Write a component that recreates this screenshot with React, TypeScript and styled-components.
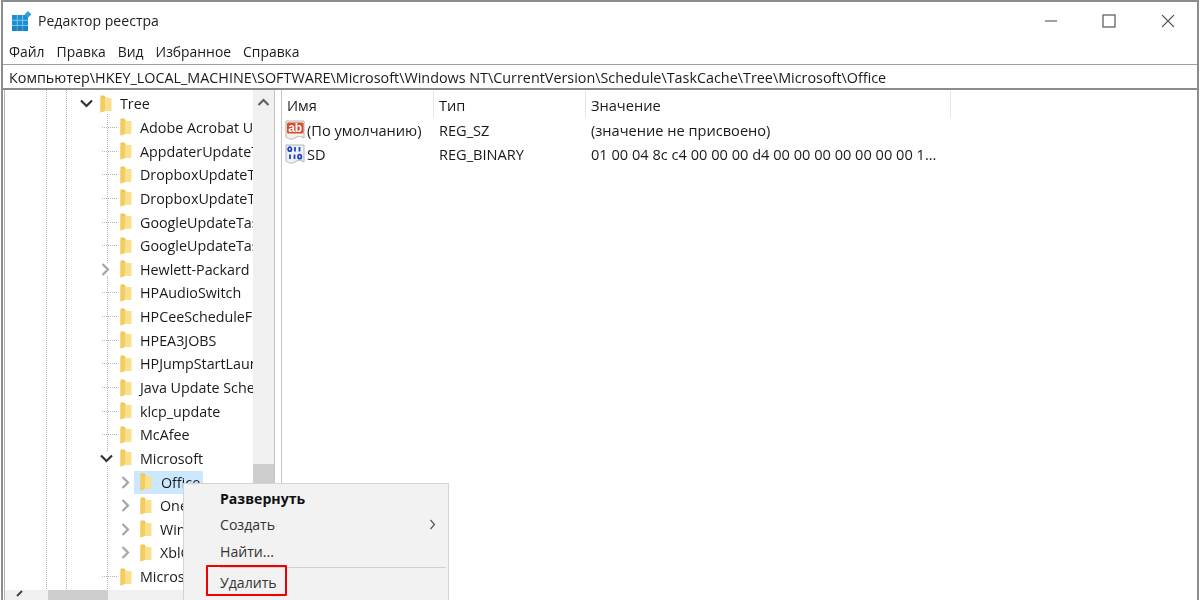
import React from 'react';
import styled, { createGlobalStyle } from 'styled-components';

const GlobalStyle = createGlobalStyle`
  html, body {
    margin: 0;
    padding: 0;
    background: #fff;
    overflow: hidden;
  }
  body {
    font-family: "Open Sans", "Noto Sans", "Liberation Sans", sans-serif;
    font-size: 14.6px;
    color: #1a1a1a;
  }
`;

const Window = styled.div`
  position: relative;
  box-sizing: border-box;
  width: 1198px;
  height: 600px;
  margin-left: 1px;
  border: 2px solid #8c8c8c;
  border-bottom: 0;
  display: flex;
  flex-direction: column;
  overflow: hidden;
  filter: blur(0.4px);
`;

const TitleBar = styled.div`
  height: 37px;
  display: flex;
  align-items: center;
  padding-left: 7px;
  flex: none;
`;

const Title = styled.span`
  flex: 1;
  margin-left: 6px;
  font-size: 14.05px;
  color: #222;
`;

const WinButton = styled.div`
  width: 58.5px;
  height: 37px;
  display: flex;
  align-items: center;
  justify-content: center;
`;

const MenuBar = styled.div`
  height: 25px;
  flex: none;
  display: flex;
  align-items: center;
  padding-left: 6px;
  gap: 12px;
  font-size: 13.9px;
`;

const AddressBar = styled.div`
  height: 26px;
  flex: none;
  box-sizing: border-box;
  border-top: 1px solid #a0a0a0;
  border-bottom: 2px solid #8c8c8c;
  display: flex;
  align-items: center;
  padding: 1px 0 0 6px;
  font-size: 14.37px;
  white-space: nowrap;
`;

const Panes = styled.div`
  flex: 1;
  display: flex;
  min-height: 0;
`;

const TreePane = styled.div`
  width: 271px;
  flex: none;
  box-sizing: border-box;
  border-left: 1px solid #b5b5b5;
  margin-left: 1px;
  border-right: 1px solid #c4c4c4;
  display: grid;
  grid-template-columns: 1fr 21px;
  grid-template-rows: 1fr 10px;
  min-height: 0;
`;

const TreeView = styled.div`
  overflow: hidden;
  min-width: 0;
  padding-top: 2px;
  font-size: 14.3px;
  background-image:
    repeating-linear-gradient(to bottom, #b4b4b4 0 1px, transparent 1px 2px),
    repeating-linear-gradient(to bottom, #b4b4b4 0 1px, transparent 1px 2px),
    repeating-linear-gradient(to bottom, #b4b4b4 0 1px, transparent 1px 2px);
  background-size: 1px 100%;
  background-repeat: no-repeat;
  background-position: 41px 0, 61px 0, 102px 24px;
`;

const Row = styled.div<{ $level: number }>`
  height: 23.65px;
  display: flex;
  align-items: center;
  white-space: nowrap;
  padding-left: ${(p) => 77 + p.$level * 20}px;
`;

const Expander = styled.span`
  width: 16px;
  box-sizing: border-box;
  padding-right: 8px;
  flex: none;
  display: flex;
  justify-content: center;
  background: #fff;
`;

const Stub = styled.span`
  width: 16px;
  height: 1px;
  flex: none;
  background-image: repeating-linear-gradient(to right, #b4b4b4 0 1px, transparent 1px 2px);
`;

const RowLabel = styled.span<{ $selected?: boolean }>`
  display: flex;
  align-items: center;
  gap: ${(p) => (p.$selected ? 9 : 8)}px;
  height: 23px;
  margin-left: -4px;
  padding-left: 6px;
  padding-right: 3px;
  background: ${(p) => (p.$selected ? '#cce8ff' : 'transparent')};
`;

const VScroll = styled.div`
  background: #f0f0f0;
  display: flex;
  flex-direction: column;
  align-items: center;
  min-height: 0;
`;

const VArrow = styled.div`
  height: 24px;
  display: flex;
  align-items: center;
`;

const VThumb = styled.div`
  width: 100%;
  height: 24px;
  margin-top: 350px;
  background: #cdcdcd;
`;

const HScroll = styled.div`
  background: #f0f0f0;
  display: flex;
  align-items: center;
  padding-left: 10px;
  overflow: hidden;
`;

const HThumb = styled.div`
  width: 60px;
  height: 100%;
  margin-left: 23px;
  background: #cdcdcd;
`;

const Corner = styled.div`
  background: #f0f0f0;
`;

const ListPane = styled.div`
  flex: 1;
  margin-left: 6px;
  border-left: 1px solid #c4c4c4;
  min-width: 0;
`;

const ListHeader = styled.div`
  height: 28px;
  display: flex;
  align-items: center;
`;

const Column = styled.div<{ $width: number }>`
  width: ${(p) => p.$width}px;
  flex: none;
  box-sizing: border-box;
  padding: 1px 0 0 5px;
  line-height: 26px;
  border-right: 1px solid #e5e5e5;
  white-space: nowrap;
`;

const ListRow = styled.div`
  height: 24px;
  display: flex;
  align-items: center;
`;

const NameCell = styled.div`
  width: 152px;
  flex: none;
  display: flex;
  align-items: center;
  gap: 2px;
  padding-left: 3px;
  box-sizing: border-box;
  white-space: nowrap;
`;

const Cell = styled.div<{ $width: number }>`
  width: ${(p) => p.$width}px;
  flex: none;
  padding-left: 5px;
  box-sizing: border-box;
  white-space: nowrap;
`;

const ContextMenu = styled.div`
  position: absolute;
  left: 180px;
  top: 481px;
  width: 266px;
  height: 130px;
  box-sizing: border-box;
  background: #f2f2f2;
  border: 1px solid #d4d4d4;
  padding-top: 1px;
  font-size: 14.1px;
`;

const MenuItem = styled.div<{ $bold?: boolean }>`
  height: 26.5px;
  display: flex;
  align-items: center;
  justify-content: space-between;
  padding: 0 8px 0 36px;
  font-weight: ${(p) => (p.$bold ? 700 : 400)};
  color: ${(p) => (p.$bold ? '#111' : '#333')};
`;

const Separator = styled.div`
  height: 1px;
  margin: 2px 2px 2px 36px;
  background: #d0d0d0;
`;

const Highlight = styled.div`
  position: absolute;
  left: 22px;
  top: 81px;
  width: 81px;
  height: 31px;
  box-sizing: border-box;
  border: 2.5px solid #f00000;
  border-radius: 1px;
`;

const RegIcon = () => (
  <svg width="22" height="22" viewBox="0 0 22 22" style={{ flex: 'none' }}>
    <rect x="2" y="5" width="16" height="16" fill="#1b8fd0" />
    <path d="M2 10.3h16M2 15.6h16M7.3 5v16M12.6 5v16" stroke="#7cc6ee" strokeWidth="1" />
    <rect x="2" y="16" width="16" height="5" fill="#0f6fae" opacity="0.35" />
    <path d="M18 1l3.4 3.4L18 7.8l-3.4-3.4z" fill="#3a9ed6" />
  </svg>
);

const Folder = () => (
  <svg width="12" height="18" viewBox="0 0 12 18" style={{ flex: 'none' }}>
    <path d="M0.5 0.5h4l1 2h1v13l-6 2z" fill="#f0c850" />
    <path d="M2 3h9.5v13H2z" fill="#fbe08c" />
    <path d="M0.5 3h4.5v12.4l-4.5 2.1z" fill="#f3cd62" />
  </svg>
);

const Chevron = ({ dir, color }: { dir: 'right' | 'down' | 'up' | 'small'; color: string }) => {
  const d = {
    right: 'M2.5 1l5.5 5.5-5.5 5.5',
    small: 'M3.5 2l4 4.5-4 4.5',
    down: 'M1 3.5l5.5 5.5 5.5-5.5',
    up: 'M1.5 9l5-5 5 5',
  }[dir];
  return (
    <svg width="13" height="13" viewBox="0 0 13 13" style={{ flex: 'none' }}>
      <path d={d} fill="none" stroke={color} strokeWidth={dir === 'small' ? 1.2 : 2.2} />
    </svg>
  );
};

const StringIcon = () => (
  <svg width="20" height="21" viewBox="0 0 20 21" style={{ flex: 'none' }}>
    <path d="M1 1h18v17c-3-2-6-2-9 0-3 2-6 1-9-1z" fill="#f3f3f3" stroke="#b4b4b4" />
    <rect x="2" y="2.5" width="16.5" height="11" rx="1.5" fill="#dd4a2d" />
    <text x="10.2" y="12" textAnchor="middle" fontSize="12" fontWeight="700" fill="#fff" fontFamily="'Liberation Sans', sans-serif">ab</text>
  </svg>
);

const BinaryIcon = () => (
  <svg width="20" height="21" viewBox="0 0 20 21" style={{ flex: 'none' }}>
    <path d="M1 1h18v17c-3-2-6-2-9 0-3 2-6 1-9-1z" fill="#eef1f8" stroke="#b4b4b4" />
    <g fill="none" stroke="#2346c4" strokeWidth="1.8">
      <ellipse cx="4.8" cy="5.2" rx="1.7" ry="2" />
      <path d="M10 3v4.5M14.5 3v4.5" />
      <path d="M5 10.5v4.5M9.5 10.5v4.5" />
      <ellipse cx="14.7" cy="12.7" rx="1.7" ry="2" />
    </g>
  </svg>
);

type Node = { label: string; level: number; expander?: 'right' | 'down'; selected?: boolean };

const nodes: Node[] = [
  { label: 'Tree', level: 0, expander: 'down' },
  { label: 'Adobe Acrobat Update Task', level: 1 },
  { label: 'AppdaterUpdateTask', level: 1 },
  { label: 'DropboxUpdateTaskMachineCore', level: 1 },
  { label: 'DropboxUpdateTaskMachineUA', level: 1 },
  { label: 'GoogleUpdateTaskMachineCore', level: 1 },
  { label: 'GoogleUpdateTaskMachineUA', level: 1 },
  { label: 'Hewlett-Packard', level: 1, expander: 'right' },
  { label: 'HPAudioSwitch', level: 1 },
  { label: 'HPCeeScheduleForUser', level: 1 },
  { label: 'HPEA3JOBS', level: 1 },
  { label: 'HPJumpStartLaunch', level: 1 },
  { label: 'Java Update Scheduler', level: 1 },
  { label: 'klcp_update', level: 1 },
  { label: 'McAfee', level: 1 },
  { label: 'Microsoft', level: 1, expander: 'down' },
  { label: 'Office', level: 2, expander: 'right', selected: true },
  { label: 'OneDrive', level: 2, expander: 'right' },
  { label: 'Windows', level: 2, expander: 'right' },
  { label: 'XblGameSave', level: 2, expander: 'right' },
  { label: 'MicrosoftEdgeUpdate', level: 1 },
];

const App: React.FC = () => (
  <>
    <GlobalStyle />
    <Window>
      <TitleBar>
        <RegIcon />
        <Title>Редактор реестра</Title>
        <WinButton>
          <svg width="14" height="14" viewBox="0 0 14 14"><path d="M1 7h12" stroke="#777" strokeWidth="1.4" /></svg>
        </WinButton>
        <WinButton>
          <svg width="14" height="14" viewBox="0 0 14 14"><rect x="1" y="1" width="12" height="12" fill="none" stroke="#555" strokeWidth="1.2" /></svg>
        </WinButton>
        <WinButton>
          <svg width="14" height="14" viewBox="0 0 14 14"><path d="M1 1l12 12M13 1L1 13" stroke="#555" strokeWidth="1.1" /></svg>
        </WinButton>
      </TitleBar>
      <MenuBar>
        <span>Файл</span>
        <span>Правка</span>
        <span>Вид</span>
        <span>Избранное</span>
        <span>Справка</span>
      </MenuBar>
      <AddressBar>Компьютер\HKEY_LOCAL_MACHINE\SOFTWARE\Microsoft\Windows NT\CurrentVersion\Schedule\TaskCache\Tree\Microsoft\Office</AddressBar>
      <Panes>
        <TreePane>
          <TreeView>
            {nodes.map((n) => (
              <Row key={n.label} $level={n.level}>
                {n.expander ? (
                  <Expander>
                    <Chevron dir={n.expander} color={n.expander === 'down' ? '#333' : '#a6a6a6'} />
                  </Expander>
                ) : (
                  <Stub />
                )}
                <RowLabel $selected={n.selected}>
                  <Folder />
                  {n.label}
                </RowLabel>
              </Row>
            ))}
          </TreeView>
          <VScroll>
            <VArrow>
              <Chevron dir="up" color="#606060" />
            </VArrow>
            <VThumb />
          </VScroll>
          <HScroll>
            <svg width="10" height="10" viewBox="0 0 10 10" style={{ flex: 'none' }}><path d="M7 1L2 6" stroke="#444" strokeWidth="2" /></svg>
            <HThumb />
          </HScroll>
          <Corner />
        </TreePane>
        <ListPane>
          <ListHeader>
            <Column $width={152}>Имя</Column>
            <Column $width={152}>Тип</Column>
            <Column $width={365}>Значение</Column>
          </ListHeader>
          <ListRow>
            <NameCell><StringIcon />(По умолчанию)</NameCell>
            <Cell $width={152}>REG_SZ</Cell>
            <Cell $width={365}>(значение не присвоено)</Cell>
          </ListRow>
          <ListRow>
            <NameCell><BinaryIcon />SD</NameCell>
            <Cell $width={152}>REG_BINARY</Cell>
            <Cell $width={365}>01 00 04 8c c4 00 00 00 d4 00 00 00 00 00 00 00 1...</Cell>
          </ListRow>
        </ListPane>
      </Panes>
      <ContextMenu>
        <MenuItem $bold>Развернуть</MenuItem>
        <MenuItem>
          Создать
          <Chevron dir="small" color="#555" />
        </MenuItem>
        <MenuItem>Найти...</MenuItem>
        <Separator />
        <MenuItem>Удалить</MenuItem>
        <Highlight />
      </ContextMenu>
    </Window>
  </>
);

export default App;
